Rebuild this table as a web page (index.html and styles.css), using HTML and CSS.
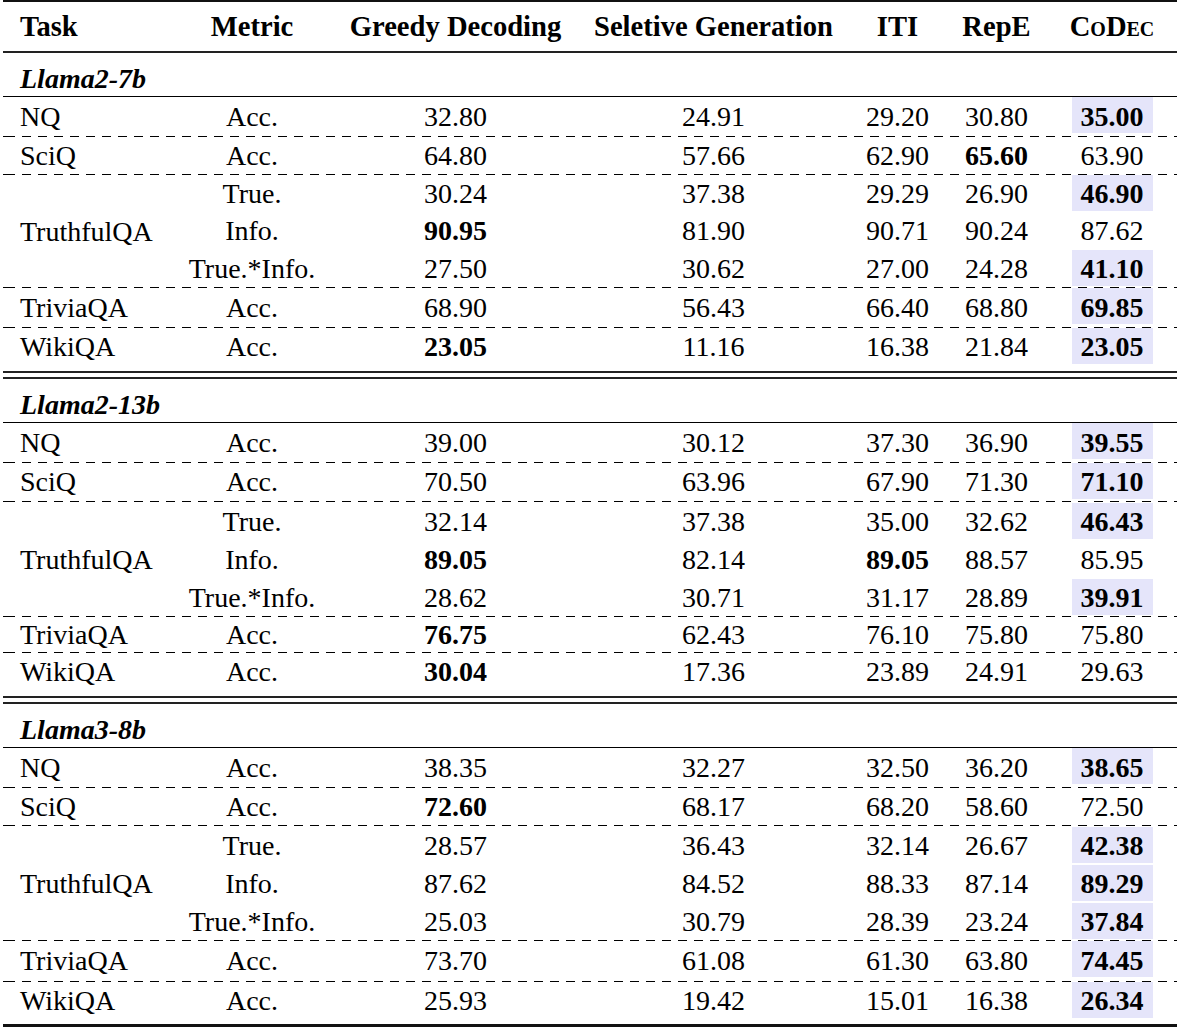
FILE: index.html
```html
<!DOCTYPE html>
<html>
<head>
<meta charset="utf-8">
<link rel="stylesheet" href="styles.css">
</head>
<body>
<div class="table">
  <div class="rule-top"></div>
  <div class="row head">
    <div class="c task">Task</div><div class="c">Metric</div><div class="c">Greedy Decoding</div><div class="c">Seletive Generation</div><div class="c">ITI</div><div class="c">RepE</div><div class="c"><span class="sc">CoDec</span></div>
  </div>
  <div class="rule-mid"></div>

  <div class="label">Llama2-7b</div>
  <div class="rule-thin"></div>
  <div class="row h39"><div class="c task">NQ</div><div class="c">Acc.</div><div class="c">32.80</div><div class="c">24.91</div><div class="c">29.20</div><div class="c">30.80</div><div class="c"><span class="hl">35.00</span></div></div>
  <div class="dash"></div>
  <div class="row h37"><div class="c task">SciQ</div><div class="c">Acc.</div><div class="c">64.80</div><div class="c">57.66</div><div class="c">62.90</div><div class="c b">65.60</div><div class="c">63.90</div></div>
  <div class="dash"></div>
  <div class="row tqa tqa-a">
    <div class="c task span3">TruthfulQA</div>
    <div class="c">True.</div><div class="c">30.24</div><div class="c">37.38</div><div class="c">29.29</div><div class="c">26.90</div><div class="c"><span class="hl">46.90</span></div>
    <div class="c">Info.</div><div class="c b">90.95</div><div class="c">81.90</div><div class="c">90.71</div><div class="c">90.24</div><div class="c">87.62</div>
    <div class="c">True.*Info.</div><div class="c">27.50</div><div class="c">30.62</div><div class="c">27.00</div><div class="c">24.28</div><div class="c"><span class="hl">41.10</span></div>
  </div>
  <div class="dash"></div>
  <div class="row h39"><div class="c task">TriviaQA</div><div class="c">Acc.</div><div class="c">68.90</div><div class="c">56.43</div><div class="c">66.40</div><div class="c">68.80</div><div class="c"><span class="hl">69.85</span></div></div>
  <div class="dash"></div>
  <div class="row h38"><div class="c task">WikiQA</div><div class="c">Acc.</div><div class="c b">23.05</div><div class="c">11.16</div><div class="c">16.38</div><div class="c">21.84</div><div class="c"><span class="hl">23.05</span></div></div>
  <div class="double"></div>

  <div class="label">Llama2-13b</div>
  <div class="rule-thin"></div>
  <div class="row h39"><div class="c task">NQ</div><div class="c">Acc.</div><div class="c">39.00</div><div class="c">30.12</div><div class="c">37.30</div><div class="c">36.90</div><div class="c"><span class="hl">39.55</span></div></div>
  <div class="dash"></div>
  <div class="row h38"><div class="c task">SciQ</div><div class="c">Acc.</div><div class="c">70.50</div><div class="c">63.96</div><div class="c">67.90</div><div class="c">71.30</div><div class="c"><span class="hl">71.10</span></div></div>
  <div class="dash"></div>
  <div class="row tqa tqa-b">
    <div class="c task span3">TruthfulQA</div>
    <div class="c">True.</div><div class="c">32.14</div><div class="c">37.38</div><div class="c">35.00</div><div class="c">32.62</div><div class="c"><span class="hl">46.43</span></div>
    <div class="c">Info.</div><div class="c b">89.05</div><div class="c">82.14</div><div class="c b">89.05</div><div class="c">88.57</div><div class="c">85.95</div>
    <div class="c">True.*Info.</div><div class="c">28.62</div><div class="c">30.71</div><div class="c">31.17</div><div class="c">28.89</div><div class="c"><span class="hl">39.91</span></div>
  </div>
  <div class="dash"></div>
  <div class="row h35"><div class="c task">TriviaQA</div><div class="c">Acc.</div><div class="c b">76.75</div><div class="c">62.43</div><div class="c">76.10</div><div class="c">75.80</div><div class="c">75.80</div></div>
  <div class="dash"></div>
  <div class="row h38"><div class="c task">WikiQA</div><div class="c">Acc.</div><div class="c b">30.04</div><div class="c">17.36</div><div class="c">23.89</div><div class="c">24.91</div><div class="c">29.63</div></div>
  <div class="double"></div>

  <div class="label">Llama3-8b</div>
  <div class="rule-thin"></div>
  <div class="row h39"><div class="c task">NQ</div><div class="c">Acc.</div><div class="c">38.35</div><div class="c">32.27</div><div class="c">32.50</div><div class="c">36.20</div><div class="c"><span class="hl">38.65</span></div></div>
  <div class="dash"></div>
  <div class="row h37"><div class="c task">SciQ</div><div class="c">Acc.</div><div class="c b">72.60</div><div class="c">68.17</div><div class="c">68.20</div><div class="c">58.60</div><div class="c">72.50</div></div>
  <div class="dash"></div>
  <div class="row tqa tqa-b">
    <div class="c task span3">TruthfulQA</div>
    <div class="c">True.</div><div class="c">28.57</div><div class="c">36.43</div><div class="c">32.14</div><div class="c">26.67</div><div class="c"><span class="hl">42.38</span></div>
    <div class="c">Info.</div><div class="c">87.62</div><div class="c">84.52</div><div class="c">88.33</div><div class="c">87.14</div><div class="c"><span class="hl">89.29</span></div>
    <div class="c">True.*Info.</div><div class="c">25.03</div><div class="c">30.79</div><div class="c">28.39</div><div class="c">23.24</div><div class="c"><span class="hl">37.84</span></div>
  </div>
  <div class="dash"></div>
  <div class="row h40"><div class="c task">TriviaQA</div><div class="c">Acc.</div><div class="c">73.70</div><div class="c">61.08</div><div class="c">61.30</div><div class="c">63.80</div><div class="c"><span class="hl">74.45</span></div></div>
  <div class="dash"></div>
  <div class="row h37"><div class="c task">WikiQA</div><div class="c">Acc.</div><div class="c">25.93</div><div class="c">19.42</div><div class="c">15.01</div><div class="c">16.38</div><div class="c"><span class="hl">26.34</span></div></div>
  <div class="rule-bottom"></div>
</div>
</body>
</html>
```
FILE: styles.css
```css
html, body {
  margin: 0;
  padding: 0;
  background: #fff;
}
body {
  font-family: "Liberation Serif", "Times New Roman", serif;
  font-size: 28px;
  color: #000;
}
.table {
  width: 1174px;
  margin-left: 3px;
}
.row {
  display: grid;
  grid-template-columns: 168px 162px 245px 271px 97px 101px 130px;
  line-height: 38px;
}
.c {
  text-align: center;
  white-space: nowrap;
  padding: 0 8px;
}
.c.task {
  text-align: left;
  padding-left: 17px;
}
.b { font-weight: bold; }
.head {
  line-height: 49px;
  font-weight: bold;
  font-size: 28.6px;
}
.sc { font-variant: small-caps; }
.h35 { line-height: 35px; }
.h37 { line-height: 37px; }
.h38 { line-height: 38px; }
.h39 { line-height: 39px; }
.h40 { line-height: 40px; }
.tqa { line-height: 37px; }
.tqa-a { grid-template-rows: 37px 37px 38px; }
.tqa-b { grid-template-rows: 38px 38px 38px; }
.tqa .c { align-self: center; }
.span3 {
  grid-column: 1;
  grid-row: 1 / span 3;
}
.hl {
  display: inline-block;
  vertical-align: top;
  width: 81px;
  height: 36px;
  line-height: inherit;
  background: #e5e5fa;
  font-weight: bold;
}
.label {
  padding: 9px 0 0 17px;
  line-height: 34px;
  font-weight: bold;
  font-style: italic;
}
.rule-top {
  height: 2px;
  background: #111;
}
.rule-mid {
  height: 2px;
  background: #222;
}
.rule-thin {
  height: 1px;
  background: #000;
}
.rule-bottom {
  margin-top: 5px;
  height: 3px;
  background: #111;
}
.dash {
  height: 1px;
  background: repeating-linear-gradient(to right, #000 0 9px, transparent 9px 16px);
  background-position: 3px 0;
}
.double {
  margin-top: 5px;
  height: 4px;
  border-top: 2px solid #222;
  border-bottom: 2px solid #222;
}
```
